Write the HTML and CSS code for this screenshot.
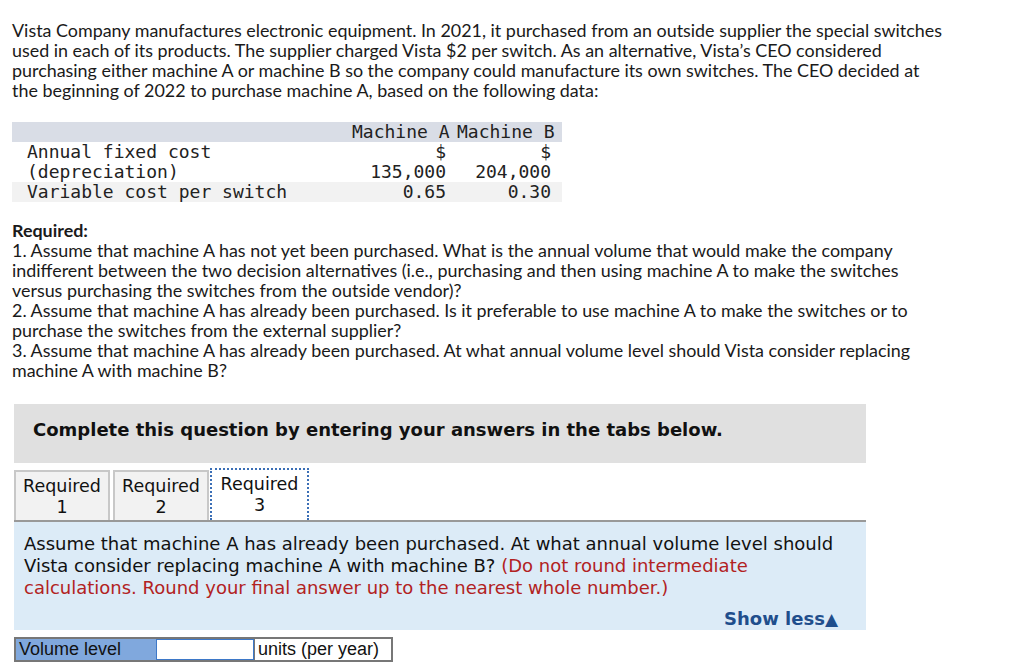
FILE: index.html
```html
<!DOCTYPE html>
<html>
<head>
<meta charset="utf-8">
<link rel="stylesheet" href="styles.css">
</head>
<body>
<div class="page">
  <p class="intro">Vista Company manufactures electronic equipment. In 2021, it purchased from an outside supplier the special switches used in each of its products. The supplier charged Vista $2 per switch. As an alternative, Vista’s CEO considered purchasing either machine A or machine B so the company could manufacture its own switches. The CEO decided at the beginning of 2022 to purchase machine A, based on the following data:</p>

  <table class="data">
    <tr class="head">
      <th class="lbl"></th>
      <th class="colh">Machine A</th>
      <th class="colh">Machine B</th>
    </tr>
    <tr>
      <td class="lbl">Annual fixed cost<br>(depreciation)</td>
      <td class="num">$<br>135,000</td>
      <td class="num">$<br>204,000</td>
    </tr>
    <tr class="alt">
      <td class="lbl">Variable cost per switch</td>
      <td class="num">0.65</td>
      <td class="num">0.30</td>
    </tr>
  </table>

  <div class="required">
    <div class="req-title">Required:</div>
    <div>1. Assume that machine A has not yet been purchased. What is the annual volume that would make the company indifferent between the two decision alternatives (i.e., purchasing and then using machine A to make the switches versus purchasing the switches from the outside vendor)?</div>
    <div>2. Assume that machine A has already been purchased. Is it preferable to use machine A to make the switches or to purchase the switches from the external supplier?</div>
    <div>3. Assume that machine A has already been purchased. At what annual volume level should Vista consider replacing machine A with machine B?</div>
  </div>

  <div class="banner">Complete this question by entering your answers in the tabs below.</div>

  <div class="tabs">
    <div class="tab">Required<br>1</div>
    <div class="tab">Required<br>2</div>
    <div class="tab active">Required<br>3</div>
  </div>

  <div class="panel">
    <p class="q">Assume that machine A has already been purchased. At what annual volume level should Vista consider replacing machine A with machine B? <span class="note">(Do not round intermediate calculations. Round your final answer up to the nearest whole number.)</span></p>
    <div class="showless">Show less<span class="tri">▲</span></div>
  </div>

  <div class="answer">
    <div class="alabel">Volume level</div>
    <div class="ainput"></div>
    <div class="aunit">units (per year)</div>
  </div>
</div>
</body>
</html>
```

FILE: styles.css
```css
html, body {
  margin: 0;
  padding: 0;
  background: #fff;
}
.page {
  padding: 20px 0 0 12px;
  width: 960px;
  color: #222;
}
.intro {
  margin: 0;
  width: 934px;
  font-family: Lato, sans-serif;
  font-size: 17.9px;
  line-height: 20px;
  color: #1a1a1a;
}
.data {
  margin-top: 22px;
  border-collapse: collapse;
  font-family: "DejaVu Sans Mono", monospace;
  font-size: 18px;
  line-height: 20px;
  color: #222;
}
.data th, .data td {
  padding: 0;
  font-weight: normal;
  vertical-align: top;
}
.data .head {
  background: #d9dde6;
}
.data .alt {
  background: #f2f2f2;
}
.data .lbl {
  width: 325px;
  padding-left: 15px;
  text-align: left;
}
.data .colh {
  width: 105px;
  text-align: left;
}
.data .num {
  text-align: right;
  padding-right: 11px;
}
.required {
  margin-top: 18px;
  font-family: Lato, sans-serif;
  font-size: 17.9px;
  line-height: 20px;
  width: 930px;
  color: #1a1a1a;
}
.req-title {
  font-weight: bold;
}
.banner {
  margin: 24px 0 0 2px;
  width: 852px;
  height: 59px;
  box-sizing: border-box;
  background: #e0e0e0;
  padding: 15px 0 0 19px;
  font-family: "DejaVu Sans", Verdana, sans-serif;
  font-weight: bold;
  font-size: 18px;
  color: #111;
}
.tabs {
  display: flex;
  margin: 5px 0 0 2px;
  gap: 3px;
  height: 52px;
  align-items: flex-end;
}
.tab {
  box-sizing: border-box;
  width: 96px;
  height: 50px;
  background: #f2f2f2;
  border: 2px solid #c8c8c8;
  border-bottom: none;
  text-align: center;
  font-family: "DejaVu Sans", Verdana, sans-serif;
  font-size: 17.5px;
  line-height: 21px;
  padding-top: 4px;
  color: #111;
}
.tab.active {
  background: #fff;
  height: 52px;
  width: 99px;
  border: 2px dotted #3b6fb6;
  border-bottom: none;
  padding-top: 4px;
  margin-left: -2px;
}
.panel {
  margin-left: 2px;
  width: 852px;
  box-sizing: border-box;
  background: #dcebf7;
  border-top: 2px solid #999;
  padding: 11px 28px 0 10px;
  height: 110px;
  font-family: "DejaVu Sans", Verdana, sans-serif;
  font-size: 18px;
  line-height: 22px;
  color: #111;
}
.q {
  margin: 0;
}
.note {
  color: #b22222;
}
.showless {
  text-align: right;
  margin-top: 9px;
  font-weight: bold;
  color: #1f4e8c;
  font-size: 18px;
}
.tri {
  font-size: 17px;
}
.answer {
  display: flex;
  margin: 7px 0 0 2px;
  width: 379px;
  height: 25px;
  box-sizing: border-box;
  border: 2px solid #777;
  font-family: "Liberation Sans", Arial, sans-serif;
  font-size: 18px;
  line-height: 21px;
  color: #111;
}
.alabel {
  width: 140px;
  background: #80a8dd;
  padding-left: 3px;
  box-sizing: border-box;
}
.ainput {
  width: 98px;
  background: #fff;
  border: 1px solid #3d78c8;
  box-sizing: border-box;
}
.aunit {
  flex: 1;
  background: #fff;
  padding-left: 3px;
  border-left: 1px solid #777;
}
```
